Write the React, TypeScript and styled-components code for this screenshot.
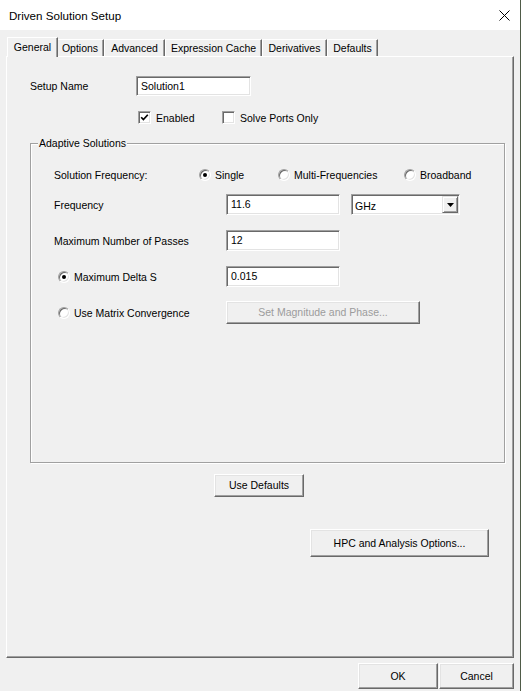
import styled, { createGlobalStyle } from 'styled-components'

const GlobalStyle = createGlobalStyle`
  html, body {
    margin: 0;
    padding: 0;
  }
  body {
    background: #f0f0f0;
    color: #000;
    font-family: "Liberation Sans", Arial, sans-serif;
    font-size: 10.5px;
  }
  * {
    box-sizing: border-box;
  }
`

const Window = styled.div`
  width: 521px;
  height: 691px;
  display: flex;
  flex-direction: column;
  background: #f0f0f0;
  border-right: 1px solid #4f5b48;
  overflow: hidden;
`

const TitleBar = styled.div`
  height: 30px;
  flex: none;
  display: flex;
  align-items: center;
  justify-content: space-between;
  padding: 0 10px 0 9px;
  background: #fff;
  font-size: 11.6px;
`

const Body = styled.div`
  display: flex;
  flex-direction: column;
  padding: 0 6px;
`

const TabStrip = styled.div`
  height: 19px;
  margin-top: 7px;
  padding-left: 3px;
  display: flex;
  align-items: flex-end;
`

const Tab = styled.div<{ $w: number; $active?: boolean }>`
  position: relative;
  width: ${(p) => (p.$active ? p.$w + 4 : p.$w)}px;
  height: ${(p) => (p.$active ? 20 : 17)}px;
  margin: ${(p) => (p.$active ? '0 -2px -1px -2px' : '0')};
  padding-bottom: ${(p) => (p.$active ? 2 : 0)}px;
  z-index: ${(p) => (p.$active ? 1 : 0)};
  display: flex;
  align-items: center;
  justify-content: center;
  background: #f0f0f0;
  border-top: 1px solid #fff;
  border-left: 1px solid #fff;
  border-right: 1px solid #696969;
  box-shadow: inset -1px 0 #a0a0a0;
  white-space: nowrap;
`

const Pane = styled.div`
  height: 602px;
  display: flex;
  flex-direction: column;
  align-items: flex-start;
  padding: 19px 0 0 23px;
  border-top: 1px solid #fff;
  border-left: 1px solid #fff;
  border-right: 1px solid #696969;
  border-bottom: 1px solid #696969;
  box-shadow: inset -1px -1px #a0a0a0;
`

const Row = styled.div<{ $h: number; $top: number }>`
  height: ${(p) => p.$h}px;
  margin-top: ${(p) => p.$top}px;
  display: flex;
  align-items: center;
`

const Label = styled.div<{ $w: number }>`
  width: ${(p) => p.$w}px;
  flex: none;
  white-space: nowrap;
`

const TextBox = styled.div<{ $w: number; $h?: number }>`
  width: ${(p) => p.$w}px;
  height: ${(p) => p.$h ?? 21}px;
  flex: none;
  display: flex;
  align-items: center;
  padding: 0 0 1px 4px;
  background: #fff;
  border-top: 1px solid #a0a0a0;
  border-left: 1px solid #a0a0a0;
  border-right: 1px solid #fff;
  border-bottom: 1px solid #fff;
  box-shadow: inset 1px 1px #696969, inset -1px -1px #e3e3e3;
`

const CheckRow = styled.div`
  height: 13px;
  margin: 15px 0 0 108px;
  display: flex;
  align-items: center;
`

const Option = styled.label<{ $w?: number; $gap?: number }>`
  width: ${(p) => (p.$w ? `${p.$w}px` : 'auto')};
  flex: none;
  display: flex;
  align-items: center;
  gap: ${(p) => p.$gap ?? 4}px;
  white-space: nowrap;
`

const CheckBox = styled.span`
  width: 13px;
  height: 13px;
  flex: none;
  display: flex;
  align-items: center;
  justify-content: center;
  background: #fff;
  border-top: 1px solid #a0a0a0;
  border-left: 1px solid #a0a0a0;
  border-right: 1px solid #fff;
  border-bottom: 1px solid #fff;
  box-shadow: inset 1px 1px #696969, inset -1px -1px #e3e3e3;
`

const Radio = styled.span<{ $on?: boolean; $indent?: number }>`
  width: 12px;
  height: 12px;
  flex: none;
  margin-left: ${(p) => p.$indent ?? 0}px;
  display: flex;
  align-items: center;
  justify-content: center;
  border-radius: 50%;
  background: #fff;
  border: 1px solid;
  border-color: #a0a0a0 #fff #fff #a0a0a0;
  box-shadow: inset 1px 1px #696969, inset -1px -1px #e3e3e3;

  &::after {
    content: '';
    display: ${(p) => (p.$on ? 'block' : 'none')};
    width: 4px;
    height: 4px;
    border-radius: 50%;
    background: #000;
  }
`

const Group = styled.div`
  width: 475px;
  height: 320px;
  margin-top: 19px;
  display: flex;
  flex-direction: column;
  border: 1px solid #a0a0a0;
  box-shadow: 1px 1px 0 #fff, inset 1px 1px 0 #fff;
`

const GroupTitle = styled.div`
  align-self: flex-start;
  margin: -7px 0 0 7px;
  padding: 0 1px;
  line-height: 13px;
  background: #f0f0f0;
`

const GroupBody = styled.div`
  display: flex;
  flex-direction: column;
  padding-left: 23px;
`

const Combo = styled(TextBox)`
  margin-left: 11px;
  padding: 1px;
  align-items: stretch;
`

const ComboText = styled.div`
  flex: 1;
  display: flex;
  align-items: center;
  padding: 2px 0 0 2px;
`

const DropButton = styled.div`
  width: 16px;
  flex: none;
  display: flex;
  align-items: center;
  justify-content: center;
  background: #f0f0f0;
  border-top: 1px solid #e3e3e3;
  border-left: 1px solid #e3e3e3;
  border-right: 1px solid #696969;
  border-bottom: 1px solid #696969;
  box-shadow: inset 1px 1px #fff, inset -1px -1px #a0a0a0;
`

const Button = styled.button<{ $w: number; $h: number; $left?: number; $top?: number }>`
  width: ${(p) => p.$w}px;
  height: ${(p) => p.$h}px;
  margin-left: ${(p) => p.$left ?? 0}px;
  margin-top: ${(p) => p.$top ?? 0}px;
  flex: none;
  padding: 0 0 1px;
  font: inherit;
  color: #000;
  background: #f0f0f0;
  border: 1px solid;
  border-color: #fff #696969 #696969 #fff;
  box-shadow: inset -1px -1px #a0a0a0, inset 1px 1px #e3e3e3;
  white-space: nowrap;

  &:disabled {
    color: #9c9c9c;
  }
`

const Footer = styled.div`
  display: flex;
  justify-content: flex-end;
  gap: 1px;
  padding-top: 5px;
`

const tabs = [
  { name: 'General', w: 47 },
  { name: 'Options', w: 48 },
  { name: 'Advanced', w: 61 },
  { name: 'Expression Cache', w: 97 },
  { name: 'Derivatives', w: 65 },
  { name: 'Defaults', w: 51 },
]

const CloseIcon = () => (
  <svg width="11" height="11" viewBox="0 0 11 11">
    <path d="M0.5 0.5 L10.5 10.5 M10.5 0.5 L0.5 10.5" stroke="#000" strokeWidth="1" fill="none" />
  </svg>
)

const CheckMark = () => (
  <svg width="9" height="9" viewBox="0 0 9 9">
    <path d="M1.2 4.2 L3.4 6.6 L7.8 1.8" stroke="#000" strokeWidth="1.7" fill="none" />
  </svg>
)

const DownArrow = () => (
  <svg width="7" height="4" viewBox="0 0 7 4">
    <path d="M0 0 H7 L3.5 4 Z" fill="#000" />
  </svg>
)

export default function App() {
  return (
    <Window>
      <GlobalStyle />
      <TitleBar>
        <span>Driven Solution Setup</span>
        <CloseIcon />
      </TitleBar>
      <Body>
        <TabStrip>
          {tabs.map((t, i) => (
            <Tab key={t.name} $w={t.w} $active={i === 0}>
              {t.name}
            </Tab>
          ))}
        </TabStrip>
        <Pane>
          <Row $h={20} $top={0}>
            <Label $w={106}>Setup Name</Label>
            <TextBox $w={115} $h={20}>Solution1</TextBox>
          </Row>
          <CheckRow>
            <Option $w={84} $gap={5}>
              <CheckBox>
                <CheckMark />
              </CheckBox>
              Enabled
            </Option>
            <Option $gap={5}>
              <CheckBox />
              Solve Ports Only
            </Option>
          </CheckRow>
          <Group>
            <GroupTitle>Adaptive Solutions</GroupTitle>
            <GroupBody>
              <Row $h={13} $top={18}>
                <Label $w={145}>Solution Frequency:</Label>
                <Option $w={79}>
                  <Radio $on />
                  Single
                </Option>
                <Option $w={126}>
                  <Radio />
                  Multi-Frequencies
                </Option>
                <Option>
                  <Radio />
                  Broadband
                </Option>
              </Row>
              <Row $h={21} $top={13}>
                <Label $w={172}>Frequency</Label>
                <TextBox $w={114}>11.6</TextBox>
                <Combo $w={109}>
                  <ComboText>GHz</ComboText>
                  <DropButton>
                    <DownArrow />
                  </DropButton>
                </Combo>
              </Row>
              <Row $h={21} $top={15}>
                <Label $w={172}>Maximum Number of Passes</Label>
                <TextBox $w={114}>12</TextBox>
              </Row>
              <Row $h={21} $top={15}>
                <Option $w={172}>
                  <Radio $on $indent={4} />
                  Maximum Delta S
                </Option>
                <TextBox $w={114}>0.015</TextBox>
              </Row>
              <Row $h={23} $top={14}>
                <Option $w={172}>
                  <Radio $indent={4} />
                  Use Matrix Convergence
                </Option>
                <Button $w={194} $h={23} disabled>
                  Set Magnitude and Phase...
                </Button>
              </Row>
            </GroupBody>
          </Group>
          <Button $w={90} $h={23} $left={184} $top={11}>
            Use Defaults
          </Button>
          <Button $w={179} $h={28} $left={280} $top={32}>
            HPC and Analysis Options...
          </Button>
        </Pane>
        <Footer>
          <Button $w={80} $h={26}>
            OK
          </Button>
          <Button $w={75} $h={26}>
            Cancel
          </Button>
        </Footer>
      </Body>
    </Window>
  )
}
